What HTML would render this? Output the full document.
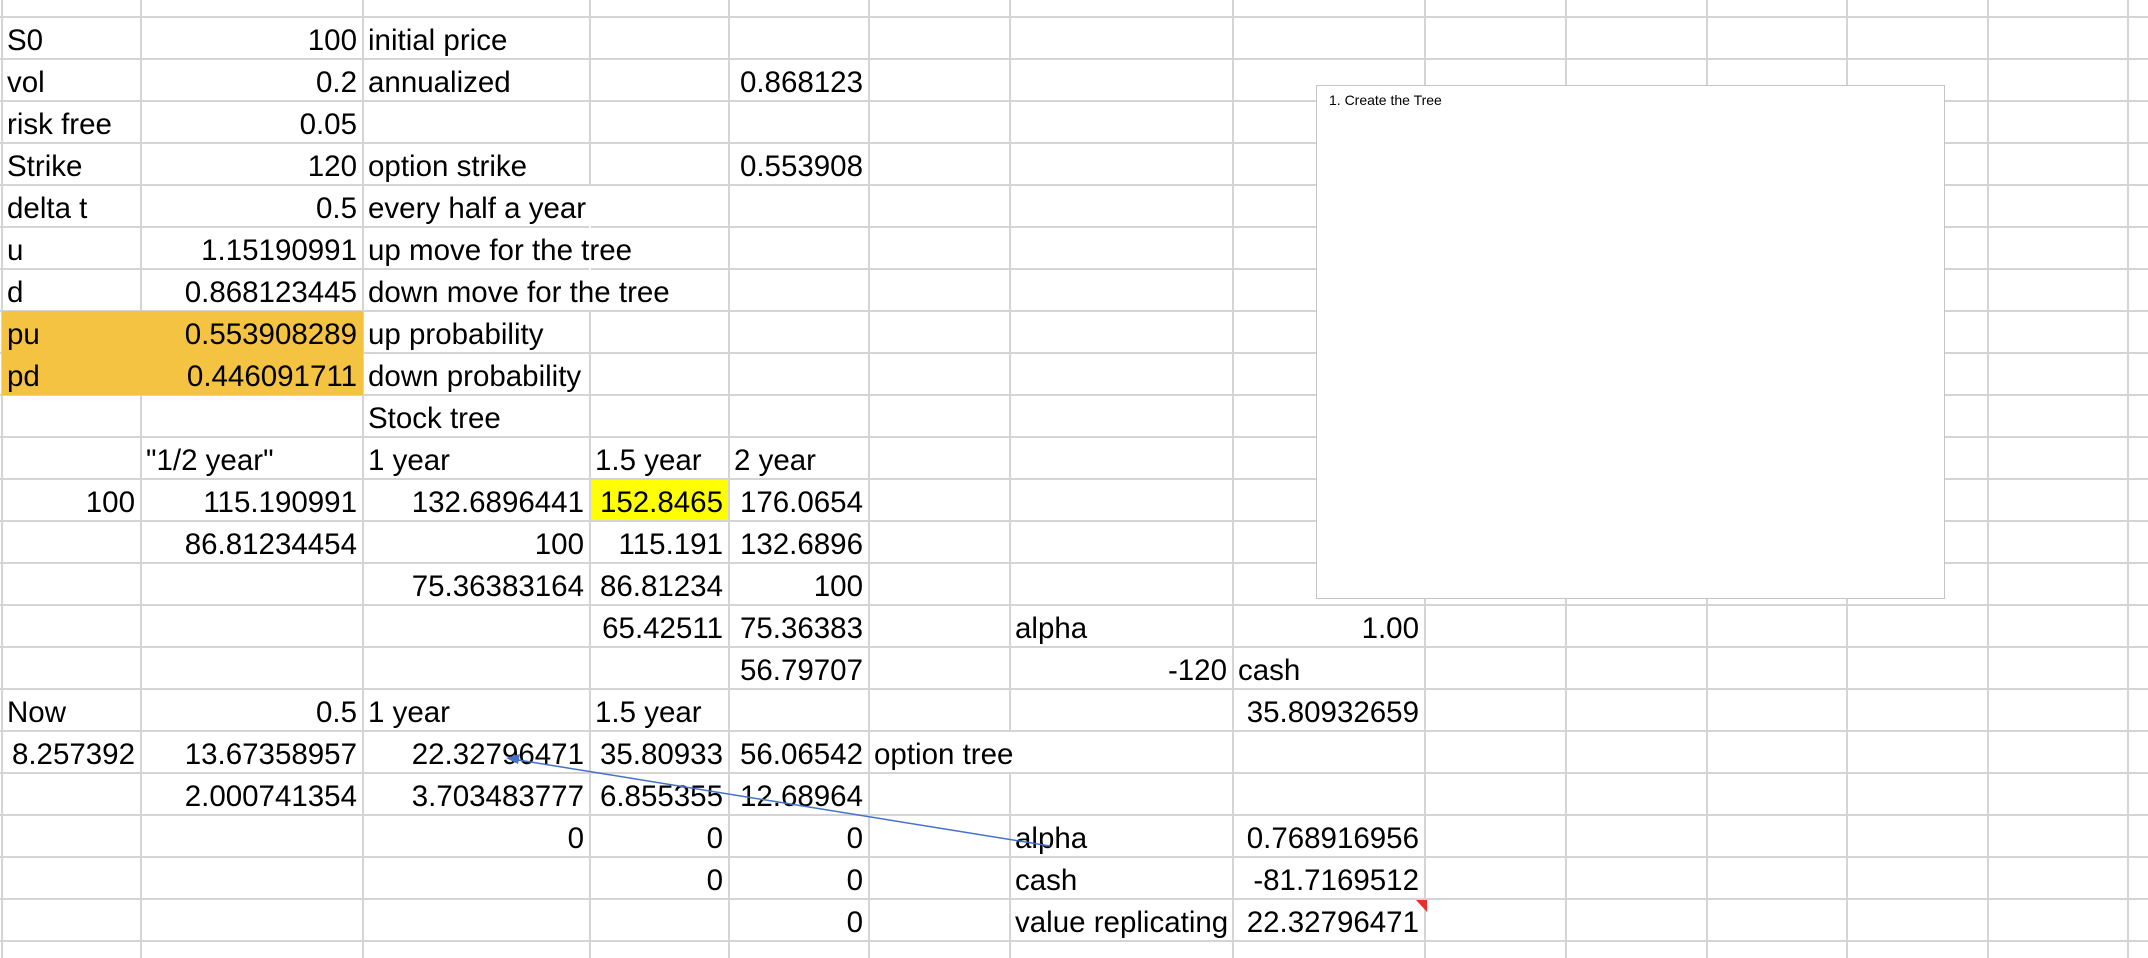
<!DOCTYPE html>
<html><head><meta charset="utf-8"><style>
html,body{margin:0;padding:0;background:#fff;}
body{width:2148px;height:958px;position:relative;overflow:hidden;font-family:"Liberation Sans",Arial,sans-serif;color:#000;}
.v{position:absolute;top:0;width:2px;height:958px;background:#d4d4d4;}
.h{position:absolute;left:0;width:2148px;height:2px;background:#d4d4d4;}
.w{position:absolute;background:#fff;}
.c{position:absolute;height:42px;line-height:42px;white-space:nowrap;font-size:29.5px;}
.r{text-align:right;}
</style></head><body>
<div class="v" style="left:1px"></div><div class="v" style="left:140px"></div><div class="v" style="left:362px"></div><div class="v" style="left:589px"></div><div class="v" style="left:728px"></div><div class="v" style="left:868px"></div><div class="v" style="left:1009px"></div><div class="v" style="left:1232px"></div><div class="v" style="left:1424px"></div><div class="v" style="left:1565px"></div><div class="v" style="left:1706px"></div><div class="v" style="left:1846px"></div><div class="v" style="left:1987px"></div><div class="v" style="left:2127px"></div>
<div class="h" style="top:16px"></div><div class="h" style="top:58px"></div><div class="h" style="top:100px"></div><div class="h" style="top:142px"></div><div class="h" style="top:184px"></div><div class="h" style="top:226px"></div><div class="h" style="top:268px"></div><div class="h" style="top:310px"></div><div class="h" style="top:352px"></div><div class="h" style="top:394px"></div><div class="h" style="top:436px"></div><div class="h" style="top:478px"></div><div class="h" style="top:520px"></div><div class="h" style="top:562px"></div><div class="h" style="top:604px"></div><div class="h" style="top:646px"></div><div class="h" style="top:688px"></div><div class="h" style="top:730px"></div><div class="h" style="top:772px"></div><div class="h" style="top:814px"></div><div class="h" style="top:856px"></div><div class="h" style="top:898px"></div><div class="h" style="top:940px"></div>
<div class="w" style="left:589px;top:186px;width:2px;height:124px"></div>
<div class="w" style="left:1009px;top:732px;width:2px;height:40px"></div>
<div style="position:absolute;left:2px;top:311px;width:361px;height:84px;background:#f5c342"></div>
<div style="position:absolute;left:591px;top:480px;width:137px;height:40px;background:#ffff00"></div>
<div style="position:absolute;left:1316px;top:85px;width:627px;height:512px;background:#fff;border:1px solid #c4c4c4"></div>
<div style="position:absolute;left:1329px;top:92px;font-size:14px;">1. Create the Tree</div>

<div class="c" style="left:7px;top:20px">S0</div>
<div class="c r" style="left:141px;width:216px;top:20px">100</div>
<div class="c" style="left:368px;top:20px">initial price</div>
<div class="c" style="left:7px;top:62px">vol</div>
<div class="c r" style="left:141px;width:216px;top:62px">0.2</div>
<div class="c" style="left:368px;top:62px">annualized</div>
<div class="c r" style="left:729px;width:134px;top:62px">0.868123</div>
<div class="c" style="left:7px;top:104px">risk free</div>
<div class="c r" style="left:141px;width:216px;top:104px">0.05</div>
<div class="c" style="left:7px;top:146px">Strike</div>
<div class="c r" style="left:141px;width:216px;top:146px">120</div>
<div class="c" style="left:368px;top:146px">option strike</div>
<div class="c r" style="left:729px;width:134px;top:146px">0.553908</div>
<div class="c" style="left:7px;top:188px">delta t</div>
<div class="c r" style="left:141px;width:216px;top:188px">0.5</div>
<div class="c" style="left:368px;top:188px">every half a year</div>
<div class="c" style="left:7px;top:230px">u</div>
<div class="c r" style="left:141px;width:216px;top:230px">1.15190991</div>
<div class="c" style="left:368px;top:230px">up move for the tree</div>
<div class="c" style="left:7px;top:272px">d</div>
<div class="c r" style="left:141px;width:216px;top:272px">0.868123445</div>
<div class="c" style="left:368px;top:272px">down move for the tree</div>
<div class="c" style="left:7px;top:314px">pu</div>
<div class="c r" style="left:141px;width:216px;top:314px">0.553908289</div>
<div class="c" style="left:368px;top:314px">up probability</div>
<div class="c" style="left:7px;top:356px">pd</div>
<div class="c r" style="left:141px;width:216px;top:356px">0.446091711</div>
<div class="c" style="left:368px;top:356px">down probability</div>
<div class="c" style="left:368px;top:398px">Stock tree</div>
<div class="c" style="left:146px;top:440px">"1/2 year"</div>
<div class="c" style="left:368px;top:440px">1 year</div>
<div class="c" style="left:595px;top:440px">1.5 year</div>
<div class="c" style="left:734px;top:440px">2 year</div>
<div class="c r" style="left:2px;width:133px;top:482px">100</div>
<div class="c r" style="left:141px;width:216px;top:482px">115.190991</div>
<div class="c r" style="left:363px;width:221px;top:482px">132.6896441</div>
<div class="c r" style="left:590px;width:133px;top:482px">152.8465</div>
<div class="c r" style="left:729px;width:134px;top:482px">176.0654</div>
<div class="c r" style="left:141px;width:216px;top:524px">86.81234454</div>
<div class="c r" style="left:363px;width:221px;top:524px">100</div>
<div class="c r" style="left:590px;width:133px;top:524px">115.191</div>
<div class="c r" style="left:729px;width:134px;top:524px">132.6896</div>
<div class="c r" style="left:363px;width:221px;top:566px">75.36383164</div>
<div class="c r" style="left:590px;width:133px;top:566px">86.81234</div>
<div class="c r" style="left:729px;width:134px;top:566px">100</div>
<div class="c r" style="left:590px;width:133px;top:608px">65.42511</div>
<div class="c r" style="left:729px;width:134px;top:608px">75.36383</div>
<div class="c" style="left:1015px;top:608px">alpha</div>
<div class="c r" style="left:1233px;width:186px;top:608px">1.00</div>
<div class="c r" style="left:729px;width:134px;top:650px">56.79707</div>
<div class="c r" style="left:1010px;width:217px;top:650px">-120</div>
<div class="c" style="left:1238px;top:650px">cash</div>
<div class="c" style="left:7px;top:692px">Now</div>
<div class="c r" style="left:141px;width:216px;top:692px">0.5</div>
<div class="c" style="left:368px;top:692px">1 year</div>
<div class="c" style="left:595px;top:692px">1.5 year</div>
<div class="c r" style="left:1233px;width:186px;top:692px">35.80932659</div>
<div class="c r" style="left:2px;width:133px;top:734px">8.257392</div>
<div class="c r" style="left:141px;width:216px;top:734px">13.67358957</div>
<div class="c r" style="left:363px;width:221px;top:734px">22.32796471</div>
<div class="c r" style="left:590px;width:133px;top:734px">35.80933</div>
<div class="c r" style="left:729px;width:134px;top:734px">56.06542</div>
<div class="c" style="left:874px;top:734px">option tree</div>
<div class="c r" style="left:141px;width:216px;top:776px">2.000741354</div>
<div class="c r" style="left:363px;width:221px;top:776px">3.703483777</div>
<div class="c r" style="left:590px;width:133px;top:776px">6.855355</div>
<div class="c r" style="left:729px;width:134px;top:776px">12.68964</div>
<div class="c r" style="left:363px;width:221px;top:818px">0</div>
<div class="c r" style="left:590px;width:133px;top:818px">0</div>
<div class="c r" style="left:729px;width:134px;top:818px">0</div>
<div class="c" style="left:1015px;top:818px">alpha</div>
<div class="c r" style="left:1233px;width:186px;top:818px">0.768916956</div>
<div class="c r" style="left:590px;width:133px;top:860px">0</div>
<div class="c r" style="left:729px;width:134px;top:860px">0</div>
<div class="c" style="left:1015px;top:860px">cash</div>
<div class="c r" style="left:1233px;width:186px;top:860px">-81.7169512</div>
<div class="c r" style="left:729px;width:134px;top:902px">0</div>
<div class="c" style="left:1015px;top:902px">value replicating</div>
<div class="c r" style="left:1233px;width:186px;top:902px">22.32796471</div>

<svg style="position:absolute;left:0;top:0" width="2148" height="958">
<line x1="512" y1="759" x2="1050" y2="846" stroke="#4472c4" stroke-width="1.5"/>
<polygon points="506,758 520,754 518,764" fill="#4472c4"/>
<polygon points="1416,900 1427,900 1427,912" fill="#e8302a"/>
</svg>
</body></html>
